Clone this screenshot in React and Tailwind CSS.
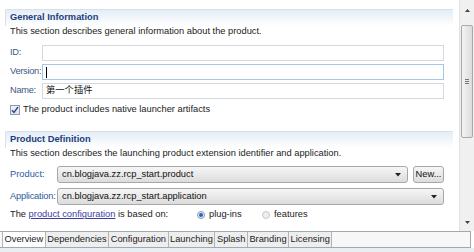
import React from 'react';

const font = { fontFamily: '"Liberation Sans", "Noto Sans CJK SC", sans-serif' };

function SectionHeader({ title }) {
  return (
    <div className="h-[17px] mr-[6px] flex items-center pl-[4px] border-t border-l border-[#d6e1ec] rounded-tl-[2px] bg-gradient-to-b from-[#e4edf6] to-white">
      <span className="font-bold text-[#1a3d7c]">{title}</span>
    </div>
  );
}

function TextRow({ label, value, focused }) {
  return (
    <div className="flex items-center h-[16px]">
      <div className="w-[37px] pl-[5px] whitespace-nowrap tracking-[-0.3px] text-[#3d5a85]">{label}</div>
      <div
        className={`w-[402px] h-[16px] flex items-center px-[3px] bg-white border ${
          focused ? 'border-[#a9c6e4]' : 'border-[#d3d9e0]'
        }`}
      >
        {focused && <div className="w-px h-[11px] bg-black" />}
        {value && <span className="text-[#111]">{value}</span>}
      </div>
    </div>
  );
}

function Arrow() {
  return (
    <svg width="6" height="4" viewBox="0 0 6 4">
      <path d="M0 0h6L3 3.5z" fill="#222" />
    </svg>
  );
}

function Combo({ value, width }) {
  return (
    <div
      className="h-[17px] flex items-center justify-between pl-[4px] pr-[6px] rounded-[3px] border border-[#a8a8a8] bg-gradient-to-b from-[#f6f6f6] to-[#dcdcdc]"
      style={{ width }}
    >
      <span className="text-[#111]">{value}</span>
      <Arrow />
    </div>
  );
}

function Radio({ checked }) {
  return (
    <div
      className={`w-[8px] h-[8px] rounded-full border flex items-center justify-center ${
        checked ? 'border-[#8a9ab0] bg-[#e8eef6]' : 'border-[#c4c8cc] bg-[#eceef0]'
      }`}
    >
      {checked && <div className="w-[4px] h-[4px] rounded-full bg-[#2a62b8]" />}
    </div>
  );
}

const tabs = ['Overview', 'Dependencies', 'Configuration', 'Launching', 'Splash', 'Branding', 'Licensing'];

export default function App() {
  return (
    <div className="w-[474px] h-[252px] bg-white flex flex-col overflow-hidden text-[9.3px] text-[#222] leading-none" style={font}>
      <div className="flex h-[231px]">
        <div className="flex-1 pt-[9px] pl-[5px] flex flex-col">
          <SectionHeader title="General Information" />
          <div className="h-[12px] flex items-center pl-[5px]">
            This section describes general information about the product.
          </div>
          <div className="mt-[7px] flex flex-col gap-[3px]">
            <TextRow label="ID:" />
            <TextRow label="Version:" focused />
            <TextRow label="Name:" value="第一个插件" />
          </div>
          <div className="mt-[5px] h-[12px] flex items-center pl-[5px] gap-[3px]">
            <div className="w-[10px] h-[10px] border border-[#8e9bb0] bg-gradient-to-b from-[#eef2f7] to-[#dde4ee] flex items-center justify-center">
              <svg width="8" height="8" viewBox="0 0 8 8">
                <path d="M1 4.2l2 2.2L7 1" stroke="#2c4a7a" strokeWidth="1.4" fill="none" />
              </svg>
            </div>
            <span>The product includes native launcher artifacts</span>
          </div>

          <div className="mt-[15px]">
            <SectionHeader title="Product Definition" />
          </div>
          <div className="h-[12px] flex items-center pl-[5px]">
            This section describes the launching product extension identifier and application.
          </div>
          <div className="mt-[6px] flex items-center">
            <div className="w-[52px] pl-[5px] whitespace-nowrap text-[#2d5aa0]">Product:</div>
            <Combo value="cn.blogjava.zz.rcp_start.product" width={351} />
            <div className="ml-[5px] w-[31px] h-[17px] flex items-center justify-center rounded-[3px] border border-[#a8a8a8] bg-gradient-to-b from-[#f6f6f6] to-[#dcdcdc] text-[#111]">
              New...
            </div>
          </div>
          <div className="mt-[5px] flex items-center">
            <div className="w-[52px] pl-[5px] whitespace-nowrap tracking-[-0.2px] text-[#2d5aa0]">Application:</div>
            <Combo value="cn.blogjava.zz.rcp_start.application" width={387} />
          </div>
          <div className="mt-[4px] h-[12px] flex items-center pl-[5px]">
            <span className="w-[187px]">
              The <span className="text-[#3d3d9e] underline">product configuration</span> is based on:
            </span>
            <Radio checked />
            <span className="ml-[4px] w-[53px]">plug-ins</span>
            <Radio />
            <span className="ml-[4px]">features</span>
          </div>
        </div>

        <div className="w-[15px] border-l border-[#e2e2e2] bg-[#f0f0f0] flex flex-col items-center">
          <div className="h-[20px] flex items-center justify-center">
            <svg width="5" height="3" viewBox="0 0 5 3">
              <path d="M0 3L2.5 0 5 3z" fill="#444" />
            </svg>
          </div>
          <div className="mt-[5px] w-[12px] h-[113px] rounded-[2px] border border-[#a9a9a9] bg-gradient-to-r from-[#f4f4f4] to-[#dcdcdc] flex flex-col items-center justify-center gap-[1px]">
            <div className="w-[4px] h-px bg-[#777]" />
            <div className="w-[4px] h-px bg-[#777]" />
            <div className="w-[4px] h-px bg-[#777]" />
          </div>
          <div className="flex-1" />
          <div className="h-[10px] flex items-start justify-center">
            <svg width="5" height="3" viewBox="0 0 5 3">
              <path d="M0 0h5L2.5 3z" fill="#444" />
            </svg>
          </div>
        </div>
      </div>

      <div className="h-[17px] flex border-t border-b border-r border-[#a0a8b0] bg-[#f7f7f7] pl-[2px] mr-[3px]">
        {tabs.map((t, i) => (
          <div
            key={t}
            className={`px-[1.5px] flex items-center border-r border-[#b4b4b4] ${
              i === 0 ? 'bg-white border-l' : 'bg-[#eeeeee]'
            }`}
          >
            {t}
          </div>
        ))}
      </div>
      <div className="flex-1 bg-[#e9eef3]" />
    </div>
  );
}
